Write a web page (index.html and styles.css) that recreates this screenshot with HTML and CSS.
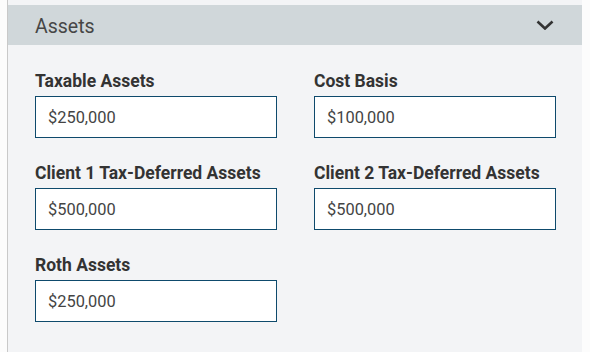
FILE: index.html
```html
<!DOCTYPE html>
<html lang="en">
  <head>
    <meta charset="UTF-8" />
    <meta name="viewport" content="width=device-width, initial-scale=1.0" />
    <title>Assets</title>
    <link rel="stylesheet" href="styles.css">
  </head>
  <body>
    <div class="panel">
      <div class="panelHeader">
        <span class="panelTitle">Assets</span>
        <svg class="chevron" width="18" height="10" viewBox="0 0 18 10">
          <polyline points="1.5,1.5 9,8.5 16.5,1.5" fill="none" stroke="#333" stroke-width="2.6" />
        </svg>
      </div>
      <div class="fields">
        <div class="field">
          <label>Taxable Assets</label>
          <input type="text" value="$250,000" />
        </div>
        <div class="field">
          <label>Cost Basis</label>
          <input type="text" value="$100,000" />
        </div>
        <div class="field">
          <label>Client 1 Tax-Deferred Assets</label>
          <input type="text" value="$500,000" />
        </div>
        <div class="field">
          <label>Client 2 Tax-Deferred Assets</label>
          <input type="text" value="$500,000" />
        </div>
        <div class="field">
          <label>Roth Assets</label>
          <input type="text" value="$250,000" />
        </div>
      </div>
    </div>
  </body>
</html>
```

FILE: styles.css
```css
body {
  margin: 0;
  background-color: #fcfcfc;
  font-family: Roboto, "Liberation Sans", sans-serif;
}
.panel {
  margin-left: 7px;
  width: 575px;
  height: 352px;
  padding-top: 5px;
  box-sizing: border-box;
  border-left: 1px solid #c9c9c9;
  background-color: #f3f4f6;
}
.panelHeader {
  height: 40px;
  display: flex;
  align-items: center;
  justify-content: space-between;
  padding: 0 27px 0 27px;
  background-color: #d0d7da;
}
.panelTitle {
  font-size: 19.5px;
  color: #464646;
  margin-top: 2px;
}
.chevron {
  display: block;
  margin-right: 1px;
}
.fields {
  display: grid;
  grid-template-columns: 242px 242px;
  column-gap: 37px;
  row-gap: 25px;
  padding: 26px 27px 0 27px;
}
.field {
  display: flex;
  flex-direction: column;
}
.field label {
  font-size: 17.5px;
  font-weight: bold;
  line-height: 20px;
  color: #333;
  margin-bottom: 5px;
  white-space: nowrap;
}
.field input {
  height: 42px;
  box-sizing: border-box;
  border: 1px solid #0e4a6c;
  border-radius: 0;
  padding: 0 12px;
  font-family: Roboto, "Liberation Sans", sans-serif;
  font-size: 16.4px;
  color: #444;
  background: #fff;
  outline: none;
}
```
